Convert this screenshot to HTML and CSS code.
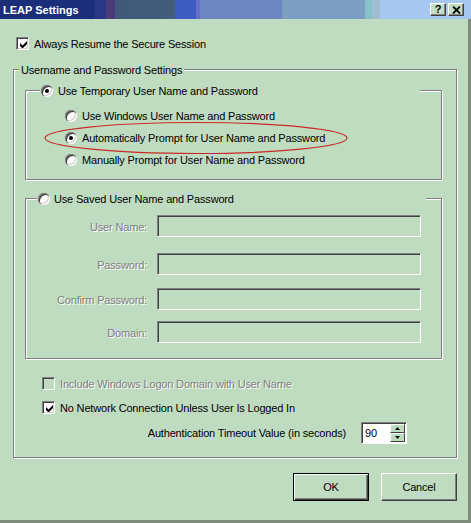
FILE: index.html
```html
<!DOCTYPE html>
<html>
<head>
<meta charset="utf-8">
<title>LEAP Settings</title>
<link rel="stylesheet" href="styles.css">
</head>
<body>
<div class="window">
  <div class="titlebar">
    <span class="title">LEAP Settings</span>
    <div class="caption-btns">
      <span class="cbtn help">?</span>
      <span class="cbtn close"><svg width="9" height="8" viewBox="0 0 9 8"><path d="M1 0.5 L8 7.5 M8 0.5 L1 7.5" stroke="#000" stroke-width="1.8" fill="none"/></svg></span>
    </div>
  </div>
  <div class="content">
    <div class="check-row top-check">
      <span class="checkbox"><svg width="7" height="7" viewBox="0 0 7 7"><polygon points="0,2 2.5,4.5 7,0 7,3 2.5,7.5 0,5" fill="#000"/></svg></span>
      <span>Always Resume the Secure Session</span>
    </div>

    <div class="group outer">
      <div class="legend outer-legend">Username and Password Settings</div>

      <div class="group inner temp">
        <div class="legend wide temp-legend"><span class="radio on"></span><span>Use Temporary User Name and Password</span></div>
        <div class="radio-list">
          <div class="radio-row"><span class="radio"></span><span>Use Windows User Name and Password</span></div>
          <div class="radio-row"><span class="radio on"></span><span>Automatically Prompt for User Name and Password</span></div>
          <div class="radio-row"><span class="radio"></span><span>Manually Prompt for User Name and Password</span></div>
        </div>
      </div>

      <div class="group inner saved">
        <div class="legend wide saved-legend"><span class="radio"></span><span>Use Saved User Name and Password</span></div>
        <div class="fields">
          <div class="field"><span class="flabel disabled">User Name:</span><span class="input"></span></div>
          <div class="field"><span class="flabel disabled">Password:</span><span class="input"></span></div>
          <div class="field"><span class="flabel disabled">Confirm Password:</span><span class="input"></span></div>
          <div class="field"><span class="flabel disabled">Domain:</span><span class="input"></span></div>
        </div>
      </div>

      <div class="check-row opt opt-first">
        <span class="checkbox off"></span>
        <span class="disabled">Include Windows Logon Domain with User Name</span>
      </div>
      <div class="check-row opt opt-second">
        <span class="checkbox"><svg width="7" height="7" viewBox="0 0 7 7"><polygon points="0,2 2.5,4.5 7,0 7,3 2.5,7.5 0,5" fill="#000"/></svg></span>
        <span>No Network Connection Unless User Is Logged In</span>
      </div>
      <div class="timeout-row">
        <span>Authentication Timeout Value (in seconds)</span>
        <div class="spin">
          <span class="spin-value">90</span>
          <div class="spin-btns">
            <span class="sbtn"><svg width="5" height="3" viewBox="0 0 5 3"><polygon points="0,3 2.5,0 5,3" fill="#000"/></svg></span>
            <span class="sbtn"><svg width="5" height="3" viewBox="0 0 5 3"><polygon points="0,0 5,0 2.5,3" fill="#000"/></svg></span>
          </div>
        </div>
      </div>
    </div>

    <div class="buttons">
      <span class="btn default">OK</span>
      <span class="btn">Cancel</span>
    </div>
  </div>
  <svg class="highlight" width="308" height="38" viewBox="0 0 308 38"><ellipse cx="153" cy="18" rx="151" ry="15.5" fill="none" stroke="#c8282a" stroke-width="1.2"/></svg>
</div>
</body>
</html>
```

FILE: styles.css
```css
* { box-sizing: border-box; }
html, body { margin: 0; padding: 0; }
body {
  background: #c0dcc0;
  font-family: "Liberation Sans", Arial, sans-serif;
  font-size: 11px;
  letter-spacing: -0.17px;
  color: #000;
}
.window {
  position: relative;
  width: 471px;
  height: 523px;
  background: #c0dcc0;
  display: flex;
  flex-direction: column;
  overflow: hidden;
}
.titlebar {
  height: 19px;
  flex: none;
  display: flex;
  align-items: center;
  justify-content: space-between;
  padding: 0 7px 0 3px;
  background: linear-gradient(to right,
    #1a2d78 0, #1c2f7c 95px,
    #2b3886 95px, #2b3886 106px,
    #4a3c7a 106px, #4a3c7a 115px,
    #40597a 115px, #425c7c 175px,
    #3e5bc2 175px, #3e5bc2 196px,
    #6a6ec8 196px, #6a6ec8 200px,
    #6c86c2 200px, #6c86c2 282px,
    #7c9ec2 282px, #7c9ec2 365px,
    #86c2c6 365px, #86c2c6 372px,
    #a0bed2 372px, #a0bed2 380px,
    #a6c8f0 380px, #a6c8f0 100%);
}
.title {
  color: #fff;
  font-weight: bold;
  font-size: 11px;
  letter-spacing: 0;
}
.caption-btns { display: flex; gap: 2px; }
.cbtn {
  width: 16px;
  height: 13px;
  background: #c4dec4;
  border: 1px solid;
  border-color: #fff #404040 #404040 #fff;
  box-shadow: inset -1px -1px 0 #808080;
  display: flex;
  align-items: center;
  justify-content: center;
  font-weight: bold;
  font-size: 11px;
  letter-spacing: 0;
  line-height: 1;
}
.content {
  flex: 1;
  border-right: 3px solid #7d8a7c;
  border-bottom: 3px solid #7d8a7c;
}

/* checkboxes & radios */
.check-row { display: flex; align-items: center; gap: 5px; height: 13px; }
.top-check { margin: 18px 0 0 16px; }
.checkbox {
  width: 13px; height: 13px; flex: none;
  background: #fff;
  border: 1px solid;
  border-color: #808080 #fff #fff #808080;
  box-shadow: inset 1px 1px 0 #404040, inset -1px -1px 0 #d4d0c8;
  display: flex; align-items: center; justify-content: center;
  padding: 1px 0 0 1px;
}
.checkbox.off { background: #c0dcc0; box-shadow: inset 1px 1px 0 #404040, inset -1px -1px 0 #c0dcc0; }
.radio {
  position: relative;
  width: 12px; height: 12px; flex: none;
  border-radius: 50%;
  background: #fff;
  box-shadow: inset 1px 1px 0 #808080, inset 2px 2px 0 #404040, inset -1px -1px 0 #fff, inset -2px -2px 0 #d4d0c8;
}
.radio.on::after {
  content: "";
  position: absolute;
  left: 4px; top: 4px;
  width: 4px; height: 4px;
  border-radius: 50%;
  background: #000;
}
.disabled { color: #808080; text-shadow: 1px 1px 0 #fff; }

/* group boxes */
.group {
  border: 1px solid #808080;
  box-shadow: inset 1px 1px 0 #fff, 1px 1px 0 #fff;
}
.legend {
  height: 13px;
  margin-top: -7px;
  background: #c0dcc0;
  display: flex;
  align-items: center;
  width: fit-content;
  white-space: nowrap;
}
.outer { margin: 19px 0 0 13px; width: 444px; height: 389px; }
.outer-legend { margin-left: 5px; padding: 0 2px; }
.inner { margin-left: 11px; width: 417px; }
.temp { margin-top: 14px; height: 90px; }
.temp-legend { margin-left: 14px; padding-left: 1px; width: 380px; gap: 5px; }
.radio-list { padding: 12px 0 0 39px; display: flex; flex-direction: column; gap: 8px; }
.radio-row { display: flex; align-items: center; gap: 5px; height: 14px; }
.saved { margin-top: 18px; height: 161px; }
.saved-legend { margin-left: 11px; padding-left: 1px; width: 389px; gap: 4px; }
.fields { padding-top: 10px; }
.field { display: grid; grid-template-columns: 121px 264px; column-gap: 10px; align-items: center; height: 22px; }
.field:nth-child(2) { margin-top: 16px; }
.field:nth-child(3) { margin-top: 13px; }
.field:nth-child(4) { margin-top: 11px; }
.flabel { text-align: right; padding-top: 2px; }
.input {
  height: 22px;
  background: #c0dcc0;
  border: 1px solid;
  border-color: #808080 #fff #fff #808080;
  box-shadow: inset 1px 1px 0 #404040;
}

.opt { margin-left: 28px; }
.opt-first { margin-top: 18px; }
.opt-second { margin-top: 11px; }
.timeout-row {
  margin-top: 8px;
  height: 22px;
  display: flex;
  align-items: center;
  justify-content: flex-end;
  gap: 15px;
  padding-right: 49px;
}
.spin {
  width: 46px; height: 22px;
  display: flex;
  border: 1px solid;
  border-color: #808080 #fff #fff #808080;
  box-shadow: inset 1px 1px 0 #404040;
  background: #fff;
  padding: 1px 1px 1px 1px;
}
.spin-value { flex: 1; padding: 3px 0 0 2px; }
.spin-btns { width: 15px; display: flex; flex-direction: column; }
.sbtn {
  flex: 1;
  background: #c0dcc0;
  border: 1px solid;
  border-color: #fff #404040 #404040 #fff;
  display: flex; align-items: center; justify-content: center;
}

/* buttons */
.buttons {
  margin-top: 15px;
  display: flex;
  justify-content: flex-end;
  gap: 12px;
  padding-right: 11px;
}
.btn {
  width: 76px; height: 28px;
  display: flex; align-items: center; justify-content: center;
  background: #c0dcc0;
  border: 1px solid;
  border-color: #fff #404040 #404040 #fff;
  box-shadow: inset -1px -1px 0 #808080;
}
.btn.default {
  border: 1px solid #000;
  box-shadow: inset 1px 1px 0 #fff, inset -1px -1px 0 #404040, inset -2px -2px 0 #808080;
}

.highlight {
  position: absolute;
  left: 43px;
  top: 120px;
}
```
